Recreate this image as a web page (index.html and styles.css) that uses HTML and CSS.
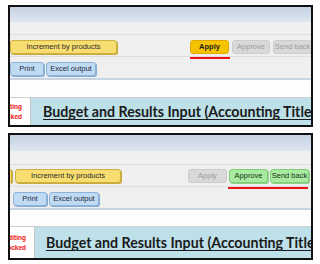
FILE: index.html
```html
<!DOCTYPE html>
<html>
<head>
<meta charset="utf-8">
<link rel="stylesheet" href="styles.css">
</head>
<body>
<div class="page">
  <div class="panel p1">
    <div class="hdr"></div>
    <div class="band"></div>
    <div class="bar bar1">
      <div class="grp">
        <span class="btn yellow inc">Increment by products</span>
      </div>
      <div class="grp right">
        <span class="btn gold w-apply">Apply</span>
        <span class="btn dis w-appr">Approve</span>
        <span class="btn dis w-send">Send back</span>
        <span class="mark mark1"></span>
      </div>
    </div>
    <div class="bar bar2">
      <div class="grp">
        <span class="btn blue w-print">Print</span>
        <span class="btn blue w-excel">Excel output</span>
      </div>
    </div>
    <div class="sep"></div>
    <div class="gapw"></div>
    <div class="title">
      <div class="lock"><span>Editing</span><span>locked</span></div>
      <div class="name">Budget and Results Input (Accounting Title)</div>
    </div>
  </div>

  <div class="panel p2">
    <div class="hdr"></div>
    <div class="band"></div>
    <div class="bar bar1">
      <div class="grp">
        <span class="btn yellow stub"></span>
        <span class="btn yellow inc">Increment by products</span>
      </div>
      <div class="grp right">
        <span class="btn dis w-apply">Apply</span>
        <span class="btn green w-appr">Approve</span>
        <span class="btn green w-send">Send back</span>
        <span class="mark mark2"></span>
      </div>
    </div>
    <div class="bar bar2">
      <div class="grp">
        <span class="btn blue w-print">Print</span>
        <span class="btn blue w-excel">Excel output</span>
      </div>
    </div>
    <div class="sep"></div>
    <div class="gapw"></div>
    <div class="title">
      <div class="lock"><span>Editing</span><span>locked</span></div>
      <div class="name">Budget and Results Input (Accounting Title)</div>
    </div>
  </div>
</div>
</body>
</html>
```
FILE: styles.css
```css
* { box-sizing: border-box; }
html, body { margin: 0; padding: 0; background: #ffffff; }
body { width: 320px; height: 264px; overflow: hidden; font-family: "Liberation Sans", Arial, sans-serif; }

.page { padding: 5px 0 0 8px; display: flex; flex-direction: column; gap: 6px; }

.panel {
  width: 305px;
  border: 2px solid #111;
  display: flex;
  flex-direction: column;
  overflow: hidden;
  background: #fff;
}
.p1 { height: 122px; }
.p2 { height: 127px; }

.hdr { background: linear-gradient(#c4d2e3, #dfe6ef); flex: none; }
.p1 .hdr { height: 15px; }
.p2 .hdr { height: 16px; }

.band { background: #eef0f2; border-bottom: 1px solid #dcdfe2; flex: none; }
.p1 .band { height: 13px; }
.p2 .band { height: 14px; }

.bar {
  background: #efefef;
  display: flex;
  justify-content: space-between;
  flex: none;
}
.bar1 { height: 22px; padding-top: 5px; border-bottom: 1px solid #dedede; }
.bar2 { height: 21px; padding-top: 5px; }
.p2 .bar1 { height: 22px; padding-top: 4px; }
.p2 .bar2 { height: 21px; padding-top: 5px; }

.grp { display: flex; gap: 2px; align-items: flex-start; position: relative; }
.right { gap: 3px; margin-right: -1px; }
.p2 .right { gap: 2px; margin-right: 2px; }
.p2 .bar2 .grp { padding-left: 3px; }

.btn {
  height: 14px;
  font-size: 7.5px;
  line-height: 12px;
  text-align: center;
  border: 1px solid;
  border-radius: 3px;
  white-space: nowrap;
  color: #2a2a2a;
  display: block;
}
.yellow { background: #f8de70; border-color: #cfb044; box-shadow: 1px 1px 0 #c9a93a; }
.inc { width: 107px; }
.p2 .inc { width: 106px; margin-left: 1px; }
.stub { width: 2px; border-radius: 0 3px 3px 0; border-left: none; }
.gold { background: #f6c300; border-color: #e2a900; color: #1b1b1b; font-weight: bold; }
.dis { background: #d9d9d9; border-color: #cdcdcd; color: #9c9c9c; }
.green { background: #a9eaa1; border-color: #7fcf78; color: #173617; box-shadow: 1px 1px 0 #8fcf88; }
.blue { background: #bfdbf3; border-color: #8eb3d8; color: #1f2a3a; box-shadow: 1px 1px 0 #8aaed2; }

.w-apply { width: 39px; }
.w-appr { width: 38px; }
.w-send { width: 39px; }
.p2 .w-appr { width: 39px; }
.w-print { width: 34px; }
.w-excel { width: 50px; }

.mark { position: absolute; height: 2px; background: #ee1111; top: 17px; }
.mark1 { left: 0; width: 40px; }
.mark2 { left: 40px; width: 80px; top: 18px; }

.sep { height: 2px; background: #c8d5e5; flex: none; }
.gapw { background: #fdfdfd; border-bottom: 1px solid #cfcfcf; flex: none; }
.p1 .gapw { height: 18px; }
.p2 .gapw { height: 17px; }

.title { display: flex; flex: 1; min-height: 0; }
.lock {
  flex: none;
  background: #fff;
  border-right: 1px solid #c4c4c4;
  display: flex;
  flex-direction: column;
  align-items: flex-end;
  justify-content: center;
  overflow: hidden;
  color: #ee1111;
  font-size: 6.5px;
  font-weight: bold;
  line-height: 10px;
  padding-right: 8px;
}
.p1 .lock { width: 21px; }
.p2 .lock { width: 25px; }
.name {
  flex: 1;
  background: #bde0e9;
  font-family: Lato, "Liberation Sans", sans-serif;
  font-weight: bold;
  font-size: 14.2px;
  color: #1a1a1a;
  text-decoration: underline;
  text-underline-offset: 2px;
  white-space: nowrap;
  overflow: hidden;
  display: flex;
  align-items: center;
  padding-left: 12px;
}
.p2 .name { padding-left: 11px; }
```
